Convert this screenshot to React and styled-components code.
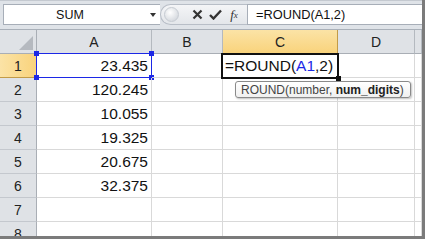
import React from 'react'
import styled, { createGlobalStyle } from 'styled-components'

const Global = createGlobalStyle`
  html, body { margin: 0; padding: 0; background: #fff; }
  body { font-family: "Liberation Sans", Arial, sans-serif; }
`

const Frame = styled.div`
  width: 422px;
  height: 236px;
  border-right: 3px solid #7b7b7b;
  border-bottom: 3px solid #7b7b7b;
  overflow: hidden;
  background: #fff;
  position: relative;
`

const FormulaBar = styled.div`
  height: 30px;
  box-sizing: border-box;
  padding: 3px 0 4px 3px;
  display: flex;
  background: #dfe3e8;
  border-top: 1px solid #c4c9d0;
  border-bottom: 1px solid #a9b0b9;
`

const NameBox = styled.div`
  width: 157px;
  box-sizing: border-box;
  background: #fff;
  border: 1px solid #a7aeb8;
  border-right: none;
  display: flex;
  align-items: center;
  position: relative;
  font-size: 12.5px;
  color: #111;
  span { flex: 1; text-align: center; padding-right: 14px; }
`

const Arrow = styled.i`
  width: 0;
  height: 0;
  border-left: 3.5px solid transparent;
  border-right: 3.5px solid transparent;
  border-top: 4px solid #333;
  margin-right: 4px;
`

const Tools = styled.div`
  width: 87px;
  box-sizing: border-box;
  display: flex;
  align-items: center;
  background: linear-gradient(#f4f5f7, #e3e6ea);
  border-radius: 11px 0 0 11px;
  border: 1px solid #b8bec7;
  border-right: none;
  padding-left: 3px;
`

const Grip = styled.i`
  width: 13px;
  height: 13px;
  border-radius: 50%;
  background: radial-gradient(circle at 40% 35%, #ffffff, #c9ced5);
  border: 1px solid #c6cbd2;
  margin-right: 9px;
`

const ToolIcon = styled.span`
  width: ${p => p.$w}px;
  display: flex;
  justify-content: center;
  align-items: center;
  color: #333;
  font-family: "Liberation Serif", serif;
  font-style: italic;
  font-size: 13px;
`

const FormulaInput = styled.div`
  flex: 1;
  background: #fff;
  border: 1px solid #a7aeb8;
  border-right: none;
  display: flex;
  align-items: center;
  padding-left: 8px;
  font-size: 12.8px;
  color: #111;
`

const Sheet = styled.div`
  display: grid;
  grid-template-columns: 37px 115px 71px 115px 77px 1fr;
  grid-auto-rows: 24px;
`

const Corner = styled.div`
  background: #dfe2e6;
  border-right: 1px solid #a9aeb5;
  border-bottom: 1px solid #a9aeb5;
  position: relative;
  &::after {
    content: '';
    position: absolute;
    right: 3px;
    bottom: 3px;
    border-left: 14px solid transparent;
    border-bottom: 14px solid #b5b9bf;
  }
`

const ColHead = styled.div`
  background: ${p => (p.$on ? 'linear-gradient(#fbe3a6, #f9d37c)' : '#dfe2e6')};
  border-right: 1px solid ${p => (p.$on ? '#c29b48' : '#b4b9bf')};
  border-bottom: 1px solid ${p => (p.$on ? '#c29b48' : '#a9aeb5')};
  display: flex;
  align-items: center;
  justify-content: center;
  font-size: 14px;
  color: #222;
`

const RowHead = styled.div`
  background: ${p => (p.$on ? 'linear-gradient(90deg, #fbe3a6, #f9d37c)' : '#dfe2e6')};
  border-right: 1px solid ${p => (p.$on ? '#c29b48' : '#a9aeb5')};
  border-bottom: 1px solid ${p => (p.$on ? '#c29b48' : '#c4c8ce')};
  display: flex;
  align-items: center;
  justify-content: center;
  font-size: 14px;
  color: #222;
`

const Cell = styled.div`
  border-right: 1px solid #d9d9d9;
  border-bottom: 1px solid #d9d9d9;
  display: flex;
  align-items: center;
  justify-content: flex-end;
  padding: 0 3px;
  font-size: 15.5px;
  color: #111;
  position: relative;
`

const RangeBox = styled.div`
  position: absolute;
  left: -1px;
  top: -1px;
  right: -1px;
  bottom: -1px;
  border: 1px solid #1c28e6;
  pointer-events: none;
`

const Handle = styled.i`
  position: absolute;
  width: 5px;
  height: 5px;
  background: #1c28e6;
  ${p => (p.$l ? 'left: -3px;' : 'right: -3px;')}
  ${p => (p.$t ? 'top: -3px;' : 'bottom: -3px;')}
`

const EditCell = styled.div`
  position: absolute;
  left: -2px;
  top: -1px;
  right: -2px;
  bottom: -2px;
  border: 2px solid #111;
  background: #fff;
  display: flex;
  align-items: center;
  padding-left: 2px;
  font-size: 15.5px;
  color: #111;
  z-index: 2;
  &::after {
    content: '';
    position: absolute;
    right: -4px;
    bottom: -4px;
    width: 5px;
    height: 5px;
    background: #111;
  }
  b { font-weight: normal; color: #1c28e6; }
`

const Tip = styled.div`
  position: absolute;
  left: 12px;
  top: 27px;
  height: 17px;
  padding: 0 6px 0 5px;
  box-sizing: border-box;
  display: flex;
  align-items: center;
  white-space: nowrap;
  background: linear-gradient(#ffffff, #f0f0f0);
  border: 1px solid #8a8a8a;
  border-radius: 3px;
  box-shadow: 1px 1px 2px rgba(0, 0, 0, 0.25);
  font-size: 12px;
  color: #444;
  z-index: 3;
  strong { color: #222; }
`

const values = ['23.435', '120.245', '10.055', '19.325', '20.675', '32.375', '', '']

const App = () => (
  <Frame>
    <Global />
    <FormulaBar>
      <NameBox>
        <span>SUM</span>
        <Arrow />
      </NameBox>
      <Tools>
        <Grip />
        <ToolIcon $w={18}>
          <svg width="11" height="11" viewBox="0 0 11 11">
            <path d="M1.5 1.5 L9.5 9.5 M9.5 1.5 L1.5 9.5" stroke="#333" strokeWidth="2.2" />
          </svg>
        </ToolIcon>
        <ToolIcon $w={18}>
          <svg width="13" height="11" viewBox="0 0 13 11">
            <path d="M1 6 L4.5 9.5 L12 1.5" stroke="#333" strokeWidth="2.4" fill="none" />
          </svg>
        </ToolIcon>
        <ToolIcon $w={20}>
          f<sub style={{ fontSize: 9 }}>x</sub>
        </ToolIcon>
      </Tools>
      <FormulaInput>=ROUND(A1,2)</FormulaInput>
    </FormulaBar>
    <Sheet>
      <Corner />
      <ColHead>A</ColHead>
      <ColHead>B</ColHead>
      <ColHead $on>C</ColHead>
      <ColHead>D</ColHead>
      <ColHead />
      {values.map((v, i) => (
        <React.Fragment key={i}>
          <RowHead $on={i === 0}>{i + 1}</RowHead>
          <Cell>
            {v}
            {i === 0 && (
              <RangeBox>
                <Handle $l $t />
                <Handle $t />
                <Handle $l />
                <Handle />
              </RangeBox>
            )}
          </Cell>
          <Cell />
          <Cell>
            {i === 0 && (
              <>
                <EditCell>
                  =ROUND(<b>A1</b>,2)
                </EditCell>
                <Tip>
                  ROUND(number,&nbsp;<strong>num_digits</strong>)
                </Tip>
              </>
            )}
          </Cell>
          <Cell />
          <Cell />
        </React.Fragment>
      ))}
    </Sheet>
  </Frame>
)

export default App
